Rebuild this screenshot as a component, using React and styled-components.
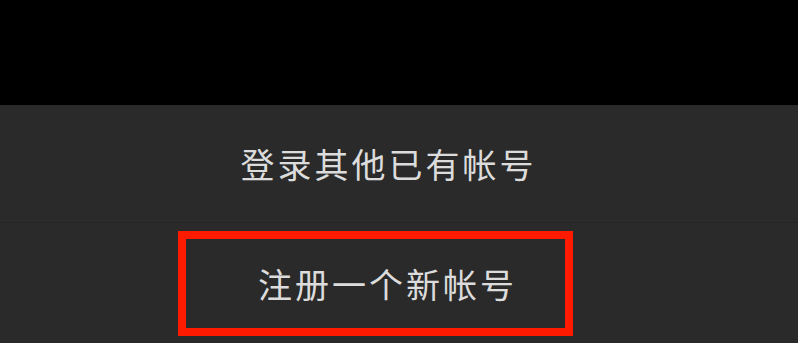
import React from "react";
import styled, { createGlobalStyle } from "styled-components";

const Global = createGlobalStyle`
  html, body { margin: 0; padding: 0; background: #000; }
  body { width: 798px; height: 343px; overflow: hidden; }
`;

const Screen = styled.div`
  width: 798px;
  height: 343px;
  display: flex;
  flex-direction: column;
  background: #000;
  font-family: "Noto Sans CJK SC", "Noto Sans", sans-serif;
`;

const Backdrop = styled.div`
  height: 105px;
  flex: none;
  background: #000;
`;

const Sheet = styled.div`
  flex: 1;
  display: flex;
  flex-direction: column;
  background: #2a2a2a;
`;

const OptionRow = styled.div`
  height: 118px;
  flex: none;
  display: flex;
  align-items: center;
  justify-content: center;
  padding-right: 21px;
  box-sizing: border-box;
  border-bottom: 1px solid #242424;
`;

const HighlightRow = styled.div`
  flex: 1;
  display: flex;
  align-items: flex-start;
  padding: 8px 0 0 178px;
  box-sizing: border-box;
`;

const Label = styled.span`
  color: #dcdcdc;
  font-size: 34px;
  font-weight: 400;
  letter-spacing: 3px;
  line-height: 1;
`;

const Highlight = styled.div`
  width: 395px;
  height: 105px;
  box-sizing: border-box;
  border: 8px solid #ff1a00;
  display: flex;
  align-items: center;
  justify-content: center;
  padding-left: 24px;
`;

export default function App() {
  return (
    <>
      <Global />
      <Screen>
        <Backdrop />
        <Sheet>
          <OptionRow>
            <Label>登录其他已有帐号</Label>
          </OptionRow>
          <HighlightRow>
            <Highlight>
              <Label>注册一个新帐号</Label>
            </Highlight>
          </HighlightRow>
        </Sheet>
      </Screen>
    </>
  );
}
